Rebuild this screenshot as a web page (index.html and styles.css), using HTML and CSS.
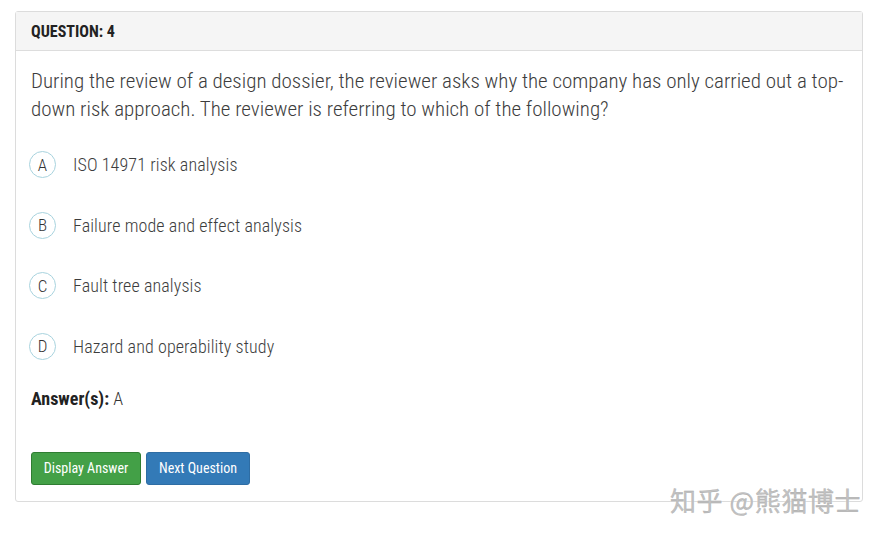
FILE: index.html
```html
<!DOCTYPE html>
<html>
<head>
<meta charset="utf-8">
<link rel="stylesheet" href="styles.css">
</head>
<body>
<div class="page">
  <div class="card">
    <div class="card-header">QUESTION: 4</div>
    <div class="card-body">
      <p class="question">During the review of a design dossier, the reviewer asks why the company has only carried out a top-down risk approach. The reviewer is referring to which of the following?</p>
      <ul class="options">
        <li class="option"><span class="letter">A</span><span class="opt-text">ISO 14971 risk analysis</span></li>
        <li class="option"><span class="letter">B</span><span class="opt-text">Failure mode and effect analysis</span></li>
        <li class="option"><span class="letter">C</span><span class="opt-text">Fault tree analysis</span></li>
        <li class="option"><span class="letter">D</span><span class="opt-text">Hazard and operability study</span></li>
      </ul>
      <div class="answer"><b>Answer(s):</b> A</div>
      <div class="buttons">
        <button class="btn btn-green">Display Answer</button>
        <button class="btn btn-blue">Next Question</button>
      </div>
    </div>
  </div>
  <div class="watermark">知乎 @熊猫博士</div>
</div>
</body>
</html>
```
FILE: styles.css
```css
* { box-sizing: border-box; }
html, body { margin: 0; padding: 0; background: #fff; }
body { font-family: "Roboto Condensed", "Liberation Sans Narrow", Roboto, sans-serif; font-stretch: condensed; color: #333; }
.page { position: relative; width: 884px; height: 536px; padding: 11px 21px 0 15px; }
.card { border: 1px solid #dcdcdc; border-radius: 3px; background: #fff; }
.card-header { background: #f5f5f5; border-bottom: 1px solid #dddddd; height: 39px; padding: 0 15px; display: flex; align-items: center; font-weight: 700; font-size: 16px; color: #222; }
.card-body { padding: 16px 15px 16px 15px; }
.question { margin: 0; font-size: 21px; line-height: 28px; color: #3d3d3d; font-weight: 300; }
.options { list-style: none; margin: 28px 0 0 0; padding: 0; display: flex; flex-direction: column; gap: 33.5px; }
.option { display: flex; align-items: center; height: 27px; }
.letter { width: 27px; height: 27px; border-radius: 50%; border: 1px solid #a8d3de; display: flex; align-items: center; justify-content: center; font-size: 17px; font-weight: 300; color: #333; margin-left: -2px; margin-right: 17px; }
.opt-text { font-size: 18px; color: #3d3d3d; font-weight: 300; letter-spacing: 0.1px; }
.answer { margin-top: 27px; font-size: 18px; line-height: 24px; color: #333; font-weight: 300; }
.answer b { color: #222; font-weight: 700; }
.buttons { margin-top: 41px; display: flex; gap: 5px; }
.btn { font-family: inherit; font-stretch: condensed; font-size: 14px; color: #fff; height: 33px; border-radius: 3px; padding: 0 10px; cursor: pointer; }
.btn-green { background: #43a047; border: 1px solid #2f7d32; width: 110px; }
.btn-blue { background: #337ab7; border: 1px solid #2e6da4; width: 104px; }
.watermark { position: absolute; left: 670px; top: 481px; font-family: "Noto Sans CJK SC", sans-serif; font-size: 26px; letter-spacing: 0.6px; color: #c2c2c2; -webkit-text-stroke: 0.3px #a5a5a5; text-shadow: 0 0 2px #fff; }
```
